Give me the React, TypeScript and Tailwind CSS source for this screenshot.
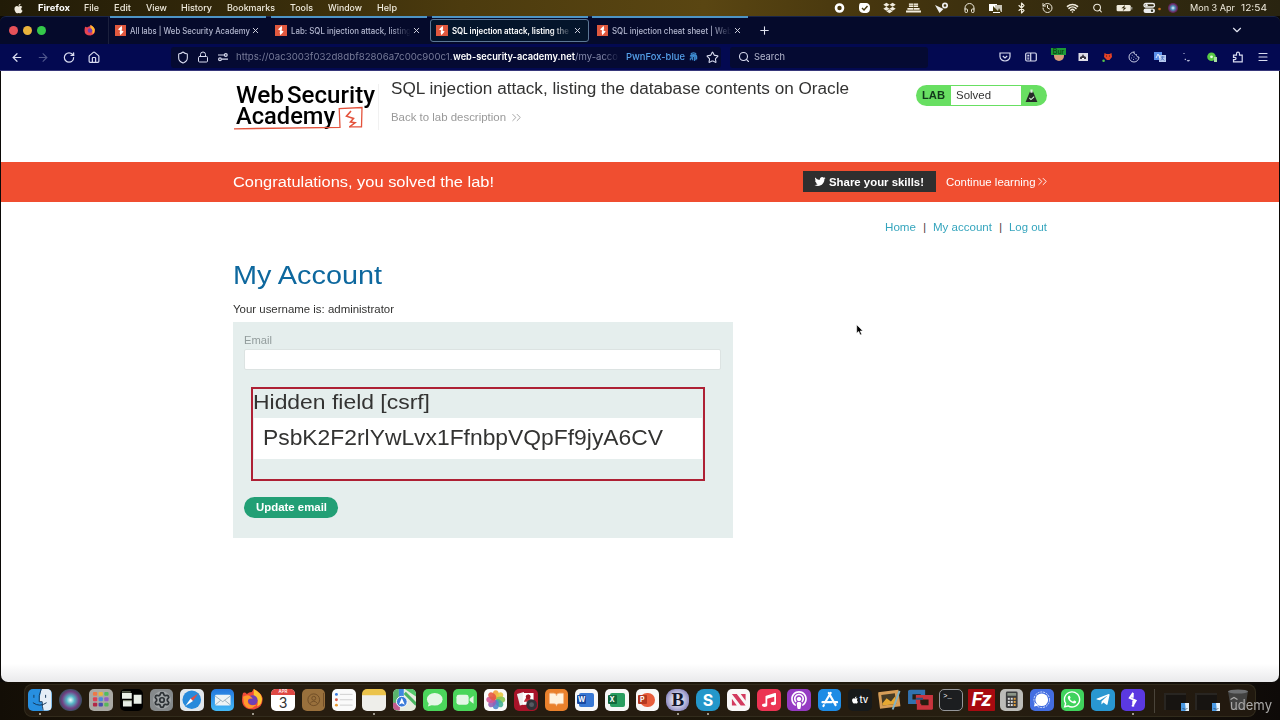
import { useLayoutEffect, useRef, useState } from "react";
import type { ReactNode } from "react";
import {
  ArrowLeft, ArrowRight, RotateCw, House, Shield, Lock, Star, Search, Plus, X, ChevronDown, ChevronsRight,
  Menu, Headphones, Wifi, Bluetooth, History, Cookie, BookOpen, Settings,
} from "lucide-react";
import {
  FaApple, FaDropbox, FaTwitter, FaWhatsapp, FaTelegramPlane, FaMusic, FaPodcast,
} from "react-icons/fa";

/* Text set to the width of its box. */
function Fit({ className, children }: { className: string; children: ReactNode }) {
  const outer = useRef<HTMLSpanElement>(null);
  const inner = useRef<HTMLSpanElement>(null);
  const [scale, setScale] = useState(1);
  useLayoutEffect(() => {
    if (outer.current && inner.current) {
      const w = inner.current.getBoundingClientRect().width / scale;
      setScale(outer.current.getBoundingClientRect().width / w);
    }
  }, []);
  return (
    <span ref={outer} className={"block shrink-0 " + className}>
      <span ref={inner} className="inline-block origin-left whitespace-nowrap align-top" style={{ transform: `scaleX(${scale})` }}>
        {children}
      </span>
    </span>
  );
}

function Bolt({ className }: { className: string }) {
  return (
    <svg viewBox="0 0 12 12" className={className}>
      <path d="M7 .8 3 4.8 5.4 6.1 4.8 8.2 5.6 11.2 9.2 7.2 6.8 6 7.5 4Z" fill="#fff" />
    </svg>
  );
}

function MenuBar() {
  return (
    <div className="flex h-4 shrink-0 items-center bg-[linear-gradient(90deg,#211b07_0%,#352a0a_20%,#4c3b0e_36%,#5a4612_55%,#46360e_68%,#382d0e_80%,#292410_100%)] text-[9px] leading-4 text-[#f0ebdd]">
      <FaApple className="ml-[13px] h-[11px] w-[11px]" />
      <Fit className="ml-[14px] w-[32px] font-bold text-white">Firefox</Fit>
      <Fit className="ml-[14px] w-[15px] font-medium">File</Fit>
      <Fit className="ml-[15px] w-[17px] font-medium">Edit</Fit>
      <Fit className="ml-[15px] w-[21px] font-medium">View</Fit>
      <Fit className="ml-[14px] w-[31px] font-medium">History</Fit>
      <Fit className="ml-[15px] w-[48px] font-medium">Bookmarks</Fit>
      <Fit className="ml-[15px] w-[23px] font-medium">Tools</Fit>
      <Fit className="ml-[15px] w-[34px] font-medium">Window</Fit>
      <Fit className="ml-[15px] w-[20px] font-medium">Help</Fit>
      <div className="ml-auto mr-[13px] flex items-center">
        <div className="grid grid-cols-[25px_25px_25px_28px_27px_26px_26px_26px_25px_25px_27px_25px_26px] items-center [&>svg]:h-[12px] [&>svg]:w-[13px]">
          <svg viewBox="0 0 13 12"><circle cx="6.5" cy="6" r="3.5" fill="none" stroke="#fff" strokeWidth="2.6" /></svg>
          <svg viewBox="0 0 13 12"><path d="M3 1h4c4 0 5 2 5 5s-1 5-5 5c-4 0-6-1-6-5 0-3 0-5 2-5Z" fill="#fff" /><path d="m4 6 2 2 3.5-4" stroke="#44370f" strokeWidth="1.4" fill="none" /></svg>
          <FaDropbox />
          <svg viewBox="0 0 13 12" className="-ml-px scale-x-115"><path d="M2.500 1.500h8v3.600h-8ZM1.200 6h10.600v1.800H1.200ZM0 8.500h13v2H0Z" fill="#f3eddf" /><path d="M6.500 1v7M1 3.300h11" stroke="#43350e" strokeWidth=".5" /></svg>
          <svg viewBox="0 0 13 12" className="-ml-px"><path d="M0 3 8.500 7 4.500 11Z" fill="#eee" /><circle cx="10" cy="3.500" r="2.200" fill="none" stroke="#eee" strokeWidth="1.700" /></svg>
          <Headphones strokeWidth={2} />
          <svg viewBox="0 0 13 12"><path d="M0 2h8v7H0Z" fill="#fff" /><path d="M6 3h7v7H6Z" fill="#c9c5b8" /><path d="m4 4 5 5 1-3 2 4H4Z" fill="#43390f" /><path d="M4 10h7v1H4Z" fill="#fff" /></svg>
          <Bluetooth strokeWidth={2.3} />
          <History strokeWidth={2} />
          <Wifi strokeWidth={3.2} />
          <Search strokeWidth={2.5} className="scale-85" />
          <svg viewBox="0 0 13 12" className="scale-x-125"><rect x="0" y="3" width="11.500" height="6.200" rx="1.300" fill="#f0ebdd" /><path d="M12.400 5v2.400" stroke="#aaa" /><path d="M7 3 4 6.300h2L5 9.300l3-3.500H6.300Z" fill="#352b0e" /></svg>
          <svg viewBox="0 0 13 12" className="overflow-visible"><rect x="1" y="1.500" width="10.500" height="3.500" rx="1.750" fill="none" stroke="#eee" strokeWidth="1.300" /><rect x=".5" y="6.500" width="11.500" height="4.500" rx="2.250" fill="#eee" /><circle cx="3.500" cy="3.200" r="1.200" fill="#eee" /><circle cx="9" cy="8.800" r="1.200" fill="#332" /><circle cx="16.500" cy="7" r="1.300" fill="#ca7527" /></svg>
        </div>
        <span className="-ml-px mr-[12px] h-[10px] w-[10px] rounded-full bg-[radial-gradient(circle,#e8f6ff_0%,#4d8eb6_30%,#6c245f_60%,#253b65_100%)]" />
        <Fit className="w-[45px]">Mon 3 Apr</Fit>
        <Fit className="ml-[6px] w-[26px]">12:54</Fit>
      </div>
    </div>
  );
}

function Tab({ title, active, width }: { title: string; active?: boolean; width: string }) {
  return (
    <div className={"flex h-full w-[160.8px] shrink-0 flex-col " + (active ? "text-white" : "text-[#b4b8d0]")}>
      <div className="h-[1.5px] w-[156px] bg-[#4d94c6]" />
      <div className={"-ml-[1.5px] mt-[1.5px] flex h-[23px] w-[158.5px] items-center rounded-[3px] border pl-[5px] " + (active ? "border-[#5c7795] bg-[#04152b]" : "border-transparent")}>
        <Bolt className="h-[11px] w-[11.5px] bg-[#e0583e]" />
        <div className={"ml-[4px] w-[121px] overflow-hidden text-[8.5px] leading-[12px] " + (active ? "font-semibold " : "font-medium ") + (title.startsWith("All") ? "" : "[mask-image:linear-gradient(90deg,#000_82%,transparent_99%)]")}>
          <Fit className={width}>{title}</Fit>
        </div>
        <X className="h-[9px] w-[9px] text-[#d7d9e6]" strokeWidth={2.5} />
      </div>
    </div>
  );
}

function TabBar() {
  return (
    <div className="flex h-[28px] shrink-0 items-start rounded-t-[6px] border-t border-[#1a2547] bg-[#050a2b]">
      <div className="flex h-full w-[108.5px] items-center border-r border-[#1b203d]">
        <span className="ml-[8.5px] h-[9px] w-[9px] rounded-full bg-[#e65159]" />
        <span className="ml-[5.5px] h-[9px] w-[9px] rounded-full bg-[#e9b33c]" />
        <span className="ml-[5px] h-[9px] w-[9px] rounded-full bg-[#34c84a]" />
        <svg viewBox="0 0 24 22" className="ml-[38px] h-[11px] w-[12px]"><path d="M2 4q2-1 4 1 2-2 5-2l2-3q7 3 9 9 1 10-9 12Q1 21 1 11q0-4 1-7Z" fill="#e84450" /><path d="M13 0q8 4 8.500 10 0 6-5 8 2-8-3.500-11Z" fill="#ffb82f" /><circle cx="12" cy="11" r="4.500" fill="#7140b4" /></svg>
      </div>
      <div className="-mt-px flex h-full pl-[1.5px]">
        <Tab title="All labs | Web Security Academy" width="w-[120px]" />
        <Tab title="Lab: SQL injection attack, listing" width="w-[120px]" />
        <Tab title="SQL injection attack, listing the" width="w-[117px]" active />
        <Tab title="SQL injection cheat sheet | Web" width="w-[120px]" />
      </div>
      <Plus className="ml-[5px] mt-[7px] h-[13px] w-[13px] text-[#e0e2ef]" strokeWidth={2} />
      <ChevronDown className="ml-auto mr-[36px] mt-[6px] h-[14px] w-[14px] text-[#e0e2ef]" strokeWidth={2} />
    </div>
  );
}

function Toolbar() {
  return (
    <div className="flex h-[27px] shrink-0 items-center border-b border-[#37377a] bg-[#030951] text-[9.5px] leading-[14px] text-[#d9dcf0]">
      <div className="ml-[10px] grid w-[161px] grid-cols-[26px_26px_25px_13px] items-center [&>svg]:h-[13px] [&>svg]:w-[14px]">
        <ArrowLeft strokeWidth={2.2} />
        <ArrowRight strokeWidth={2} className="text-[#4f568c]" />
        <RotateCw strokeWidth={2.4} className="scale-95" />
        <House strokeWidth={2.2} />
      </div>
      <div className="flex h-[21px] w-[550px] items-center rounded-[3px] bg-[#050a32] pl-[5px]">
        <Shield className="h-[13px] w-[14px]" strokeWidth={2} />
        <Lock className="ml-[7px] h-[12px] w-[12px]" strokeWidth={2} />
        <svg viewBox="0 0 12 10" className="ml-[8px] h-[10px] w-[12px]" fill="none" stroke="currentColor" strokeWidth="1.200"><path d="M1 3h6M5 7.200h6" /><circle cx="8.800" cy="3" r="1.400" /><circle cx="3" cy="7.200" r="1.400" /></svg>
        <Fit className="ml-[7px] w-[216.5px] text-[#777b99]">https://0ac3003f032d8dbf82806a7c00c900c1.</Fit>
        <Fit className="w-[122px] font-semibold text-white">web-security-academy.net</Fit>
        <div className="w-[45px] [mask-image:linear-gradient(90deg,#000_60%,transparent_100%)]"><Fit className="w-[43px] text-[#858aab]">/my-acco</Fit></div>
        <Fit className="ml-[6.5px] w-[59px] font-medium text-[#55a0e9]">PwnFox-blue</Fit>
        <svg viewBox="0 0 9 11" className="ml-[3.5px] h-[10px] w-[9px]" fill="none" stroke="#3d8bd0" strokeWidth="1.200"><path d="M1.500 2.500c1-2 5-2 6 0M1 5c0-3 7-3 7 0v3M2 8V5c0-1.600 5-1.600 5 0v4M3.500 9V5.500c0-1 2-1 2 0V10M1 7v2" /></svg>
        <Star className="ml-[8.5px] h-[13px] w-[13px]" strokeWidth={2} />
      </div>
      <div className="ml-[9px] flex h-[21px] w-[198px] items-center rounded-[3px] bg-[#050a32] pl-[8px]">
        <Search className="h-[12px] w-[12px]" strokeWidth={2.2} />
        <Fit className="ml-[4px] w-[31px] text-[#b6b9cf]">Search</Fit>
      </div>
      <div className="ml-auto mr-[10px] grid grid-cols-[26px_26px_26px_25px_26px_26px_26px_26px_26px_26px_12px] items-center [&>svg]:h-[12px] [&>svg]:w-[12px]">
        <svg viewBox="0 0 12 12" fill="none" stroke="currentColor" strokeWidth="1.200"><path d="M1 2h10v3.500a5 4.500 0 0 1-10 0ZM3.800 5 6 7l2.200-2" /></svg>
        <svg viewBox="0 0 12 12" fill="none" stroke="currentColor" strokeWidth="1.200"><rect x=".7" y="2" width="10.600" height="8" rx="1.200" /><path d="M5.700 2v8M2.300 4.300h2M2.300 6h2M2.300 7.800h2" /></svg>
        <div className="-mt-[4px] flex h-[14px] w-[15px] flex-col items-center">
          <span className="z-10 h-[7px] w-[15px] shrink-0 bg-[#1c9a35] text-center text-[7px] leading-[7px] text-[#062c0b]">Bur</span>
          <span className="-mt-[2px] h-[8px] w-[10px] rounded-b-full bg-[#d69d77]" />
        </div>
        <svg viewBox="0 0 12 12"><rect x="1.500" y="2" width="9.500" height="8" fill="#dddce6" /><path d="M3 8V6l2-1 1-2 1 2 2 1v2Z" fill="#383540" /><path d="M5 7h2v1H5Z" fill="#fff" /></svg>
        <svg viewBox="0 0 12 12"><path d="m2.500 2 2 1h3l2-1 .5 4-2.500 3H5L2 6Z" fill="#e34227" /><path d="M4 5h1M7 5h1" stroke="#521" /><circle cx="1.600" cy="9.800" r="1.300" fill="#56c54a" /></svg>
        <Cookie strokeWidth={1.8} />
        <svg viewBox="0 0 12 12" className="overflow-visible"><rect x="0" y="1" width="8" height="8" fill="#5b8fea" /><rect x="5" y="4" width="7" height="7" fill="#b6c9ee" /><path d="m2 7 2-4 2 4" fill="none" stroke="#fff" strokeWidth=".8" /><path d="M7 6h3.500M8.700 5v1c0 2-1 3-2 3.400M7.500 7l3 2.500" fill="none" stroke="#4a6fbd" strokeWidth=".8" /></svg>
        <svg viewBox="0 0 12 12" fill="none" stroke="#c7cbe5" strokeWidth="1.100"><path d="M3.500 2.500h1M4.800 7.800l1 1M7 9.500c1 .6 2 .3 2.500-.3" /></svg>
        <svg viewBox="0 0 12 12"><circle cx="5.500" cy="5.800" r="4.300" fill="#58ca45" /><circle cx="5.500" cy="5.800" r="1.400" fill="#e6ffe1" /><path d="M8 6h3v5H8Z" fill="#a9dfa0" /></svg>
        <svg viewBox="0 0 12 12" fill="none" stroke="currentColor" strokeWidth="1.200"><path d="M1.500 4.200h3V2.700c0-2 3-2 3 0v1.500h2.700v6.600H1.500V8.600h1.300c1.600 0 1.600-2.200 0-2.200H1.500Z" /></svg>
        <Menu strokeWidth={2.2} className="-ml-[1px]" />
      </div>
    </div>
  );
}

function LabHeader() {
  return (
    <div className="mx-auto flex h-[91px] w-[814px] items-start">
      <div className="relative ml-[1px] mt-[13px] h-[46px] w-[145px] border-r border-[#f1f1f1] pl-[1.5px] font-['Roboto','Noto_Sans',sans-serif] text-[23px] font-medium leading-[21px] text-black">
        <div className="mt-[1px] flex"><Fit className="w-[48px]">Web</Fit><Fit className="ml-[3px] w-[88px]">Security</Fit></div>
        <Fit className="w-[99px]">Academy</Fit>
        <svg viewBox="0 0 145 46" className="absolute left-0 top-0 h-[46px] w-[145px]" fill="none" stroke="#e4533c" strokeWidth="1.300">
          <path d="M0 44.800 106 43.300 105.200 24.500 128 23.500 127.500 42.800 115 42.800" />
          <path d="M117 27 112.500 32.200 119.500 34.500 116.500 38 121 38.800 115.500 42.800" strokeWidth="1.600" />
        </svg>
      </div>
      <div className="ml-[11.5px] mt-[8px] flex flex-col">
        <Fit className="w-[458px] text-[16px] leading-[20px] text-[#333332]">SQL injection attack, listing the database contents on Oracle</Fit>
        <div className="mt-[10.5px] flex items-center text-[11px] leading-[14px] text-[#999]">
          <Fit className="w-[115px]">Back to lab description</Fit>
          <ChevronsRight className="ml-[3px] h-[15px] w-[15px]" strokeWidth={1.4} />
        </div>
      </div>
      <div className="ml-auto mt-[14px] flex h-[21px] w-[131.5px] items-center overflow-hidden rounded-full bg-[#68df62] py-px text-[10.5px] leading-[19px] text-[#333332]">
        <Fit className="ml-[6px] w-[23px] font-bold text-[#12391b]">LAB</Fit>
        <div className="ml-[6px] h-[19px] w-[70px] bg-white pl-[5px]"><Fit className="w-[35px]">Solved</Fit></div>
        <svg viewBox="0 0 12 14" className="ml-[4px] h-[15px] w-[13px]"><path d="M4.500 3.500h3L11.500 13H.5Z" fill="#252b28" /><path d="M5 1.500h2v3H5Z" fill="#dce8db" /><path d="m4 9.300 1.500 1.500L8.500 8" fill="none" stroke="#dfffe0" /></svg>
      </div>
    </div>
  );
}

function Page() {
  return (
    <div className="mx-px flex h-[611px] shrink-0 flex-col overflow-hidden rounded-b-[7px] bg-[linear-gradient(180deg,#fff_97%,#e9e9eb_100%)] font-['Liberation_Sans',Arial,sans-serif] text-[#333332]">
      <LabHeader />
      <div className="h-[40px] shrink-0 bg-[#f04e30] text-white">
        <div className="mx-auto flex h-[39px] w-[814px] items-center">
          <Fit className="w-[261px] text-[15.5px] leading-[20px]">Congratulations, you solved the lab!</Fit>
          <div className="ml-auto flex h-[21px] w-[133px] items-center bg-[#2f2f2f] text-[10.5px] leading-[14px]">
            <FaTwitter className="ml-[11px] h-[11px] w-[12px]" />
            <Fit className="ml-[3px] w-[95px] font-bold">Share your skills!</Fit>
          </div>
          <Fit className="ml-[10px] w-[89.5px] text-[10.5px] leading-[14px]">Continue learning</Fit>
          <ChevronsRight className="-mr-[3px] h-[15px] w-[15px]" strokeWidth={1.5} />
        </div>
      </div>
      <div className="mx-auto w-[814px]">
        <div className="flex justify-end pt-[18px] text-[10.5px] leading-[14px] text-[#35a5bd]">
          <Fit className="w-[31px]">Home</Fit>
          <span className="w-[17px] text-center text-[#333332]">|</span>
          <Fit className="w-[59px]">My account</Fit>
          <span className="w-[17px] text-center text-[#333332]">|</span>
          <Fit className="w-[38px]">Log out</Fit>
        </div>
        <h1 className="mt-[25px] text-[25.5px] leading-[32px] text-[#0e689e]"><Fit className="w-[149px]">My Account</Fit></h1>
        <Fit className="mt-[11px] w-[161px] text-[11px] leading-[14px]">Your username is: administrator</Fit>
        <div className="mt-[6px] flex h-[216px] w-[500px] flex-col bg-[#e5eeed] px-[11px]">
          <Fit className="mt-[11px] w-[28px] text-[10.5px] leading-[14px] text-[#929c9c]">Email</Fit>
          <div className="mt-[1.5px] h-[21.5px] w-[477px] shrink-0 rounded-[2px] border border-[#dce3e2] bg-white" />
          <div className="ml-[7px] mt-[16.5px] h-[94px] w-[454px] shrink-0 border-2 border-[#ae2034]">
            <Fit className="h-[29px] w-[177px] text-[21px] leading-[26px]">Hidden field [csrf]</Fit>
            <div className="flex h-[41px] items-start border-x border-[#e5eeed] bg-white pl-[9px] pt-[6px] text-[21.5px] leading-[28px]">
              <Fit className="w-[400px]">PsbK2F2rlYwLvx1FfnbpVQpFf9jyA6CV</Fit>
            </div>
          </div>
          <div className="mt-[16px] flex h-[21px] w-[94px] shrink-0 items-center rounded-full bg-[#229f75] pl-[11.5px] text-[10.5px] leading-[14px] text-white">
            <Fit className="w-[71px] font-bold">Update email</Fit>
          </div>
        </div>
      </div>
    </div>
  );
}

function DockIcon({ bg, dot, children }: { bg: string; dot?: boolean; children?: ReactNode }) {
  return (
    <div className="flex flex-col items-center">
      <div className={"flex h-[21.5px] w-[23.5px] items-center justify-center overflow-hidden rounded-[5px] text-white " + bg}>{children}</div>
      {dot && <span className="mt-[2.5px] h-[2px] w-[2px] rounded-full bg-[#c5c0b5]" />}
    </div>
  );
}

const art = "h-full w-full";

function OfficeIcon({ letter, dark, light }: { letter: string; dark: string; light: string }) {
  return (
    <div className={"flex h-[14px] w-[15px] items-center rounded-[2px] " + light}>
      <span className={"-ml-[2px] h-[9px] w-[9px] rounded-[1px] text-center text-[7px] font-bold leading-[9px] " + dark}>{letter}</span>
    </div>
  );
}

function Dock() {
  return (
    <div className="relative flex h-[38px] shrink-0 bg-[linear-gradient(90deg,#130e06,#241a0b_20%,#1c160a_50%,#211b0d_75%,#0e0a08)] pl-[24px] pt-[2px]">
      <div className="flex h-[33px] w-[1232px] rounded-[8px] border border-[#393323]/70 bg-[#292012]/70 pt-[4px]">
        <div className="grid h-[26px] grid-cols-[repeat(37,30.37px)]">
          <DockIcon bg="bg-[#278fe0]" dot>
            <svg viewBox="0 0 24 22" className={art}><path d="M14 0h10v22H15l-1-9h-2q0-8 2-13Z" fill="#e5eef6" /><path d="M6 6v3M18 6v3M5 14q7 5 14 0M13.500 0q-3 7-2 13h3q0 5 1 9" stroke="#17395b" fill="none" /></svg>
          </DockIcon>
          <DockIcon bg="bg-[radial-gradient(circle,#f2ffff_0%,#56b7c6_25%,#713f83_53%,#22514f_78%,#182322_100%)] !rounded-full" />
          <DockIcon bg="bg-[#aaa9a4]">
            <svg viewBox="0 0 24 22" className={art}>{["#ee7948", "#e9b53b", "#51bc60", "#df4056", "#4d89dc", "#9360c6", "#b12947", "#474dae", "#59b85a"].map((c, i) => <rect key={c} x={4 + (i % 3) * 5.8} y={3 + Math.floor(i / 3) * 5.5} width="4.400" height="4" rx="1" fill={c} />)}</svg>
          </DockIcon>
          <DockIcon bg="bg-black">
            <svg viewBox="0 0 24 22" className={art}><path d="M2 4h10v6H2ZM14 6h8v9h-8ZM3 12h9v6H3Z" fill="#e8eee7" /><path d="M2 3h9M3 12h9" stroke="#8e9b81" /></svg>
          </DockIcon>
          <DockIcon bg="bg-[#85898b]"><Settings className="h-[18px] w-[18px] rounded-full bg-[#a0a4a6] text-[#2d3236]" strokeWidth={2.3} /></DockIcon>
          <DockIcon bg="bg-[#e3e8ec]">
            <svg viewBox="0 0 24 22" className={art}><circle cx="12" cy="11" r="9.500" fill="#288adb" /><path d="M18.500 4.500 10.800 9.800l2.400 2.400Z" fill="#e34d43" /><path d="m5.500 17.500 5.300-7.700 2.400 2.400Z" fill="#fff" /></svg>
          </DockIcon>
          <DockIcon bg="bg-[linear-gradient(#2376dd,#45baf6)]">
            <svg viewBox="0 0 24 22" className={art}><rect x="4" y="6" width="16" height="11" rx="1.500" fill="#edf3f6" /><path d="m4 7 8 6 8-6M4 16.500l6-5M20 16.500l-6-5" fill="none" stroke="#8aa2af" strokeWidth=".8" /></svg>
          </DockIcon>
          <DockIcon bg="bg-transparent" dot>
            <svg viewBox="0 0 24 22" className={art}><path d="M2 4q2-1 4 1 2-2 5-2l2-3q7 3 9 9 1 10-9 12Q1 21 1 11q0-4 1-7Z" fill="#f04a38" /><path d="M13 0q8 4 8.500 10 0 6-5 8 2-8-3.500-11Z" fill="#ffc52f" /><circle cx="12" cy="11.500" r="5" fill="#7140b4" /><path d="M2 8q6-4 10 2-5-1-5 3 0 5 9 3-8 8-13-1Z" fill="#ff982c" /></svg>
          </DockIcon>
          <DockIcon bg="bg-white">
            <div className="flex h-full w-full flex-col items-center"><span className="h-[6px] w-full bg-[#df4843] text-center text-[4.5px] font-medium leading-[6px]">APR</span><span className="text-[14px] leading-[15px] text-[#333]">3</span></div>
          </DockIcon>
          <DockIcon bg="bg-[#99703c]">
            <svg viewBox="0 0 24 22" className={art} fill="none" stroke="#714e27"><circle cx="12" cy="11" r="6" /><circle cx="12" cy="9.500" r="2" /><path d="M8 15q4-5 8 0M22 4v14" /></svg>
          </DockIcon>
          <DockIcon bg="bg-[#fafafa]">
            <svg viewBox="0 0 24 22" className={art}><path d="M8 5.500h13M8 11h13M8 16.500h13" stroke="#cfcfcf" /><circle cx="4.500" cy="5.500" r="1.500" fill="#397ade" /><circle cx="4.500" cy="11" r="1.500" fill="#dc5d4c" /><circle cx="4.500" cy="16.500" r="1.500" fill="#e99a31" /></svg>
          </DockIcon>
          <DockIcon bg="bg-[linear-gradient(#ebc34b_0%,#ebc34b_28%,#eeeeea_30%)]" dot />
          <DockIcon bg="bg-[#e6ebdf]">
            <svg viewBox="0 0 24 22" className={art}><path d="M12 0h12v8L12 0Z" fill="#54c76a" /><path d="M0 0h6v22H0Z" fill="#5ab46e" /><path d="M6 0h5v16H6Z" fill="#3e87df" /><path d="M12 4 24 16M3 22 8 14" stroke="#49b661" strokeWidth="3" /><path d="M0 14h7v8H0Z" fill="#c25c8f" /><circle cx="9" cy="13" r="5.500" fill="#397bd9" stroke="#fff" /><path d="m9 9 3 7-3-1.500L6 16Z" fill="#fff" /></svg>
          </DockIcon>
          <DockIcon bg="bg-[#4bd65b]"><svg viewBox="0 0 24 22" className={art}><ellipse cx="12" cy="10.500" rx="8" ry="6.500" fill="#e5f6e6" /><path d="m6 14-1 4 5-2Z" fill="#e5f6e6" /></svg></DockIcon>
          <DockIcon bg="bg-[#4bd65b]"><svg viewBox="0 0 24 22" className={art}><rect x="3.500" y="6" width="12.500" height="10" rx="2.500" fill="#e5f6e6" /><path d="m17 10 4-3v8l-4-3Z" fill="#e5f6e6" /></svg></DockIcon>
          <DockIcon bg="bg-[#fafafa]">
            <svg viewBox="0 0 24 22" className={art}>{["#f2a33a", "#e7c843", "#8bc653", "#45af95", "#4c87cb", "#9460b5", "#d45594", "#e55944"].map((c, i) => <ellipse key={c} cx="12" cy="6" rx="3.200" ry="4.700" fill={c} fillOpacity=".9" transform={`rotate(${i * 45} 12 11)`} />)}</svg>
          </DockIcon>
          <DockIcon bg="bg-[#a81429]">
            <svg viewBox="0 0 24 22" className={art}><path d="m3 5 7-2 3 12-7 2Z" fill="#eee" /><path d="M9 4h11v12H9Z" fill="#fff" /><path d="M10 13 14.500 5 18 13Z" fill="#c02937" /><circle cx="14.500" cy="8" r="2.500" fill="#9e1726" /><circle cx="18" cy="16" r="5.500" fill="#303137" /><circle cx="18" cy="16" r="2.500" fill="#555961" /></svg>
          </DockIcon>
          <DockIcon bg="bg-[#ea812c]"><BookOpen className="h-[17px] w-[19px] fill-[#fff3df] text-[#f2b482]" strokeWidth={1} /></DockIcon>
          <DockIcon bg="bg-[#f8f8f8]"><OfficeIcon letter="W" dark="bg-[#1748a0]" light="bg-[#3777d3]" /></DockIcon>
          <DockIcon bg="bg-[#f8f8f8]"><OfficeIcon letter="X" dark="bg-[#12683b]" light="bg-[#299d60]" /></DockIcon>
          <DockIcon bg="bg-[#f8f8f8]"><OfficeIcon letter="P" dark="bg-[#b53820]" light="bg-[#e75c3b] !rounded-full" /></DockIcon>
          <DockIcon bg="bg-[radial-gradient(circle,#dcdcee_30%,#8d8ac0_75%)] !rounded-[9px]" dot><span className="font-['Liberation_Serif',serif] text-[19px] font-bold leading-[20px] text-[#14162c]">B</span></DockIcon>
          <DockIcon bg="bg-[#2497ca] !rounded-[8px]" dot><span className="text-[16px] font-bold leading-[20px]">S</span></DockIcon>
          <DockIcon bg="bg-[#f9f8f8]"><svg viewBox="0 0 24 22" className={art}><path d="M5 5h5l9 12h-5ZM5 10l5 7H5ZM14 5h5v7Z" fill="#d33b5f" /></svg></DockIcon>
          <DockIcon bg="bg-[#ec3453]"><FaMusic className="h-[14px] w-[14px]" /></DockIcon>
          <DockIcon bg="bg-[#953bc3]"><FaPodcast className="h-[18px] w-[18px]" /></DockIcon>
          <DockIcon bg="bg-[#1e8ce5]"><svg viewBox="0 0 24 22" className={art} fill="none" stroke="#fff" strokeWidth="2.200" strokeLinecap="round"><path d="M13 4 7 14M11 4l7 12.500M4.500 13.500H14M17 13.500h2.500M6 16.500l-.5 1" /></svg></DockIcon>
          <DockIcon bg="bg-[#171a1b]"><FaApple className="h-[8px] w-[8px]" /><span className="text-[9.5px] font-medium leading-[10px]">tv</span></DockIcon>
          <DockIcon bg="bg-transparent">
            <svg viewBox="0 0 24 22" className={art}><g transform="rotate(-7 12 11)"><path d="M1 2h21v17H1Z" fill="#d79e58" /><path d="M4 5h14v11H4Z" fill="#463b25" /><path d="m4 14 5-5 4 4 5-5v8H4Z" fill="#e6a832" /></g><path d="M22 2 15 21" stroke="#82b3c6" strokeWidth="2" /></svg>
          </DockIcon>
          <DockIcon bg="bg-transparent !w-[27px]">
            <svg viewBox="0 0 27 22" className={art} fill="none" strokeWidth="4.500"><path d="M16 8V3H3v10h8" stroke="#3272af" /><path d="M11 15V8.500h13V19H12v-4" stroke="#c9343d" /><path d="M9 10h7" stroke="#245584" strokeWidth="2" /></svg>
          </DockIcon>
          <DockIcon bg="bg-[#1c1e20] border border-[#95979a]"><span className="mb-[7px] mr-[7px] font-['Liberation_Mono',monospace] text-[7px] leading-[8px]">&gt;_</span></DockIcon>
          <DockIcon bg="bg-[#a80a10] !rounded-[1px] !w-[27px]"><span className="text-[19px] font-bold italic leading-[20px] tracking-[-1px]">Fz</span></DockIcon>
          <DockIcon bg="bg-[#bcbcb8]">
            <svg viewBox="0 0 24 22" className={art}><rect x="6" y="2.500" width="12" height="17" rx="1.500" fill="#3c3d3e" /><path d="M7.500 4h9v3h-9Z" fill="#8b9587" />{[0, 1, 2, 3, 4, 5, 6, 7, 8].map((i) => <rect key={i} x={8 + (i % 3) * 3} y={9 + Math.floor(i / 3) * 3.2} width="2" height="2" fill={i % 3 === 2 ? "#e5a33e" : "#ddd"} />)}</svg>
          </DockIcon>
          <DockIcon bg="bg-[#446ee1]"><svg viewBox="0 0 24 22" className={art}><circle cx="12" cy="11" r="6.500" fill="#fff" /><circle cx="12" cy="11" r="8" fill="none" stroke="#dce6ff" strokeDasharray="2 1" /><path d="m5 14-1 4 5-1Z" fill="#fff" /></svg></DockIcon>
          <DockIcon bg="bg-[#40d35d]"><FaWhatsapp className="h-[19px] w-[20px]" /></DockIcon>
          <DockIcon bg="bg-[#2997d1]"><FaTelegramPlane className="h-[15px] w-[16px]" /></DockIcon>
          <DockIcon bg="bg-[#5b39e1]" dot>
            <svg viewBox="0 0 24 22" className={art} fill="none" stroke="#fff" strokeWidth="2"><path d="M12.500 4 9 9l6 3-3.500 6M12 4v5M12.500 12v6" /></svg>
          </DockIcon>
        </div>
        <span className="ml-[6px] h-[24px] w-px bg-[#4a443a]" />
        <div className="ml-[9px] flex gap-[9px] pt-[4px]">
          {[0, 1].map((i) => (
            <div key={i} className="flex h-[17px] w-[22px] items-end justify-end border-l-2 border-t-2 border-[#282521] bg-[#171411]">
              <svg viewBox="0 0 8 8" className="mb-[-1px] mr-[-3px] h-[8px] w-[8px] shrink-0"><path d="M0 0h8v8H0Z" fill="#4a9ae4" /><path d="M4 0h4v8H4.500V4Z" fill="#e6f2fa" /><path d="M1.500 5.500q3 1.500 5 0" stroke="#234" strokeWidth=".6" fill="none" /></svg>
            </div>
          ))}
        </div>
        <svg viewBox="0 0 22 22" className="ml-[10px] h-[22px] w-[22px]"><path d="M1 2h20l-3 19H4Z" fill="#4b4c4d" fillOpacity=".8" /><ellipse cx="11" cy="2.500" rx="10" ry="2" fill="#6e7072" /></svg>
      </div>
      <div className="absolute left-[1230px] top-[15px] text-[14px] leading-[16px] text-[#aaa9a8]">
        <Fit className="w-[42px]">udemy</Fit>
        <svg viewBox="0 0 8 4" className="absolute left-0 top-[-1px] h-[4px] w-[8px]" fill="none" stroke="#aaa9a8" strokeWidth="1.300"><path d="m.5 3.500 3.500-2 3.500 2" /></svg>
      </div>
    </div>
  );
}

export default function App() {
  return (
    <div className="relative flex h-[720px] w-[1280px] flex-col overflow-hidden bg-[#0b0907] font-['Inter','Liberation_Sans',sans-serif]">
      <MenuBar />
      <TabBar />
      <Toolbar />
      <Page />
      <Dock />
      <svg viewBox="0 0 8 12" className="absolute left-[856px] top-[324px] h-[12px] w-[8px]"><path d="M.7.7v8.500l2-1.800 1.500 3.500 1.500-.7-1.500-3.200h2.700Z" fill="#000" stroke="#fff" strokeWidth=".6" /></svg>
    </div>
  );
}
